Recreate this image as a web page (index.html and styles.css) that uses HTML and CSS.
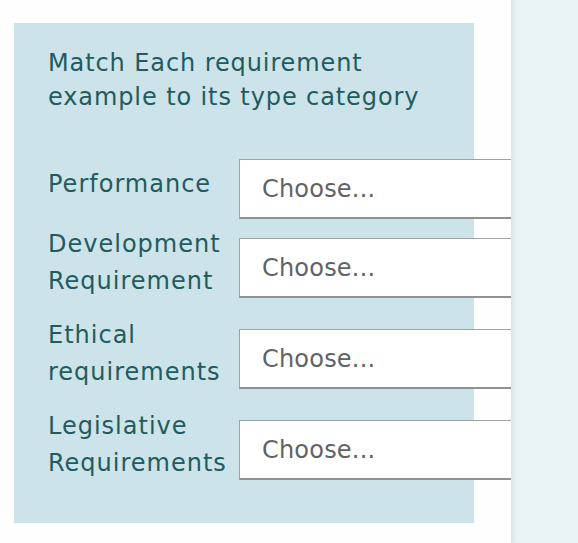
FILE: index.html
```html
<!DOCTYPE html>
<html lang="en">
<head>
<meta charset="utf-8">
<title>Match requirements</title>
<link rel="stylesheet" href="styles.css">
</head>
<body>
<div class="page">
  <main class="main">
    <section class="question">
      <p class="prompt">Match Each requirement example to its type category</p>
      <div class="rows">
        <div class="row">
          <label class="label" for="s1">Performance</label>
          <select class="choice" id="s1"><option>Choose...</option></select>
        </div>
        <div class="row">
          <label class="label" for="s2">Development Requirement</label>
          <select class="choice" id="s2"><option>Choose...</option></select>
        </div>
        <div class="row">
          <label class="label" for="s3">Ethical requirements</label>
          <select class="choice" id="s3"><option>Choose...</option></select>
        </div>
        <div class="row">
          <label class="label" for="s4">Legislative Requirements</label>
          <select class="choice" id="s4"><option>Choose...</option></select>
        </div>
      </div>
    </section>
  </main>
  <aside class="side"></aside>
</div>
</body>
</html>
```

FILE: styles.css
```css
html, body {
  margin: 0;
  padding: 0;
  background: #ffffff;
}

.page {
  display: flex;
  width: 578px;
  height: 543px;
  overflow: hidden;
}

.main {
  flex: 0 0 511px;
  overflow: hidden;
  padding: 23px 0 0 14px;
  box-sizing: border-box;
  background: #fefefe;
}

.question {
  width: 460px;
  box-sizing: border-box;
  background: #cce4e9;
  padding: 23px 0 31px 34px;
  font-family: "DejaVu Sans", sans-serif;
  color: #215b60;
}

.prompt {
  margin: 0 0 45px 0;
  max-width: 380px;
  font-size: 24px;
  line-height: 34px;
  letter-spacing: 0.9px;
}

.rows {
  display: flex;
  flex-direction: column;
  gap: 7px;
}

.row {
  display: flex;
  align-items: center;
  gap: 7px;
}

.label {
  flex: 0 0 184px;
  font-size: 24px;
  line-height: 37px;
  letter-spacing: 1px;
  padding-bottom: 10px;
}

.choice {
  flex: 0 0 320px;
  height: 60px;
  margin: 0;
  padding: 0 0 0 22px;
  -webkit-appearance: none;
  appearance: none;
  background: #ffffff;
  border: 1px solid #9ea2a5;
  border-bottom: 2px solid #8e9295;
  border-radius: 0;
  font-family: "DejaVu Sans", sans-serif;
  font-size: 24px;
  letter-spacing: 0.2px;
  color: #5f6366;
  box-sizing: border-box;
}

.side {
  flex: 1 1 auto;
  background: #eaf3f6;
  box-shadow: inset 6px 0 6px -5px rgba(160, 185, 200, 0.35);
}
```
